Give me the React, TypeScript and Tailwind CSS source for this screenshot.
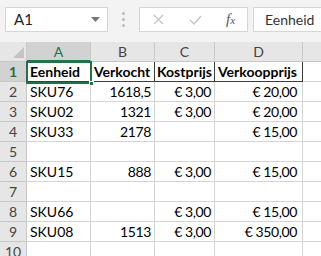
import React from "react";

const cols = [
  { key: "A", w: "w-[64px]" },
  { key: "B", w: "w-[64px]" },
  { key: "C", w: "w-[60px]" },
  { key: "D", w: "w-[88px]" },
];

type Row = { n: number; a?: string; b?: string; c?: string; d?: string };

const rows: Row[] = [
  { n: 2, a: "SKU76", b: "1618,5", c: "€ 3,00", d: "€ 20,00" },
  { n: 3, a: "SKU02", b: "1321", c: "€ 3,00", d: "€ 20,00" },
  { n: 4, a: "SKU33", b: "2178", d: "€ 15,00" },
  { n: 5 },
  { n: 6, a: "SKU15", b: "888", c: "€ 3,00", d: "€ 15,00" },
  { n: 7 },
  { n: 8, a: "SKU66", c: "€ 3,00", d: "€ 15,00" },
  { n: 9, a: "SKU08", b: "1513", c: "€ 3,00", d: "€ 350,00" },
  { n: 10 },
];

function RowHead({ n, active }: { n: number; active?: boolean }) {
  return (
    <div
      className={
        "w-[27px] shrink-0 h-full flex items-center justify-center border-r border-b border-[#c8c8c8] text-[14px] " +
        (active ? "bg-[#d2d2d2] text-[#217346]" : "bg-[#e6e6e6] text-[#444]")
      }
    >
      {n}
    </div>
  );
}

export default function App() {
  return (
    <div
      className="w-[321px] h-[256px] overflow-hidden bg-white"
      style={{ fontFamily: "Lato, 'Liberation Sans', sans-serif" }}
    >
      {/* formula bar */}
      <div className="h-[42px] bg-[#f3f3f3] flex items-start pt-[7px] pl-[5px]">
        <div className="w-[103px] h-[25px] bg-white border border-[#d6d6d6] flex items-center justify-between pl-[8px] pr-[7px]">
          <span className="text-[15px] text-[#222]">A1</span>
          <svg width="9" height="5" viewBox="0 0 9 5">
            <path d="M0 0h9L4.5 5z" fill="#777" />
          </svg>
        </div>
        <div className="w-[31px] h-[25px] flex flex-col items-center justify-center gap-[3px]">
          <span className="w-[3px] h-[3px] rounded-full bg-[#bcbcbc]" />
          <span className="w-[3px] h-[3px] rounded-full bg-[#bcbcbc]" />
          <span className="w-[3px] h-[3px] rounded-full bg-[#bcbcbc]" />
        </div>
        <div className="w-[109px] h-[25px] bg-white border border-[#d6d6d6] flex items-center">
          <div className="w-[36px] flex justify-center">
            <svg width="11" height="11" viewBox="0 0 11 11">
              <path d="M1 1l9 9M10 1l-9 9" stroke="#c4c4c4" strokeWidth="1.3" />
            </svg>
          </div>
          <div className="w-[38px] flex justify-center">
            <svg width="13" height="10" viewBox="0 0 13 10">
              <path d="M1 5l4 4 7-8" stroke="#c4c4c4" strokeWidth="1.4" fill="none" />
            </svg>
          </div>
          <div className="flex-1 flex justify-center">
            <span className="italic text-[15px] text-[#555]" style={{ fontFamily: "'Liberation Serif', serif" }}>
              f<span className="text-[11px]">x</span>
            </span>
          </div>
        </div>
        <div className="ml-[5px] flex-1 h-[25px] bg-white border border-r-0 border-[#d6d6d6] flex items-center pl-[11px]">
          <span className="text-[14px] text-[#333] whitespace-nowrap">Eenheid</span>
        </div>
      </div>

      {/* sheet */}
      <div className="relative">
        {/* column headers */}
        <div className="flex h-[20px]">
          <div className="w-[27px] shrink-0 h-full bg-[#e6e6e6] border-r border-b border-[#c8c8c8] relative">
            <svg className="absolute right-[2px] bottom-[3px]" width="11" height="11" viewBox="0 0 11 11">
              <path d="M11 0v11H0z" fill="#c3c3c3" />
            </svg>
          </div>
          {cols.map((c, i) => (
            <div
              key={c.key}
              className={
                c.w +
                " shrink-0 h-full flex items-center justify-center text-[14px] border-r border-[#c8c8c8] " +
                (i === 0
                  ? "bg-[#d2d2d2] text-[#217346] border-b-2 border-b-[#217346]"
                  : "bg-[#e6e6e6] text-[#444] border-b border-b-[#c8c8c8]")
              }
            >
              {c.key}
            </div>
          ))}
          <div className="flex-1 h-full bg-[#e6e6e6] border-b border-[#c8c8c8]" />
        </div>

        {/* row 1 */}
        <div className="flex h-[20px] text-[14px] font-bold text-black">
          <RowHead n={1} active />
          <div className="w-[64px] shrink-0 h-full flex items-center pl-[3px] border-b border-[#3c3c3c]">Eenheid</div>
          <div className="w-[64px] shrink-0 h-full flex items-center pl-[2px] border-x border-b border-[#3c3c3c]">Verkocht</div>
          <div className="w-[60px] shrink-0 h-full flex items-center pl-[2px] border-r border-b border-[#3c3c3c] overflow-hidden whitespace-nowrap">Kostprijs</div>
          <div className="w-[88px] shrink-0 h-full flex items-center pl-[3px] border-r border-b border-[#3c3c3c]">Verkoopprijs</div>
          <div className="flex-1 h-full border-b border-[#d4d4d4]" />
        </div>

        {rows.map((r) => (
          <div key={r.n} className="flex h-[20px] text-[14px] text-black whitespace-nowrap">
            <RowHead n={r.n} />
            <div className="w-[64px] shrink-0 h-full flex items-center pl-[3px] border-r border-b border-[#d4d4d4]">{r.a}</div>
            <div className="w-[64px] shrink-0 h-full flex items-center justify-end pr-[3px] border-r border-b border-[#d4d4d4] tracking-[-0.4px]">{r.b}</div>
            <div className="w-[60px] shrink-0 h-full flex items-center justify-end pr-[3px] border-r border-b border-[#d4d4d4] tracking-[-0.4px]">{r.c}</div>
            <div className="w-[88px] shrink-0 h-full flex items-center justify-end pr-[5px] border-r border-b border-[#d4d4d4] tracking-[-0.4px]">{r.d}</div>
            <div className="flex-1 h-full border-b border-[#d4d4d4]" />
          </div>
        ))}

        {/* selection A1 */}
        <div className="absolute left-[26px] top-[19px] w-[66px] h-[23px] border-2 border-[#217346] pointer-events-none" />
        <div className="absolute left-[89px] top-[39px] w-[5px] h-[5px] bg-[#217346] border border-white pointer-events-none" />
      </div>
    </div>
  );
}
